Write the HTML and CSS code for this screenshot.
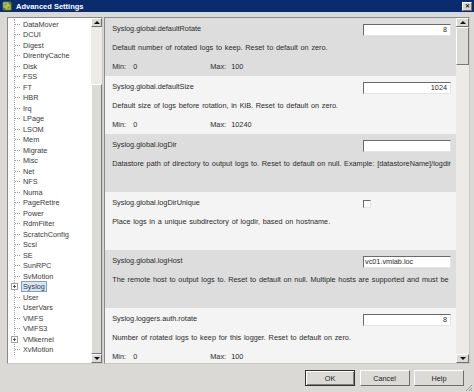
FILE: index.html
```html
<!DOCTYPE html>
<html>
<head>
  <meta charset="UTF-8">
  <title>Advanced Settings</title>
  <link rel="stylesheet" href="styles.css">
</head>
<body>

  <div class="titlebar">
    <svg class="app-icon" viewBox="0 0 10 10">
      <rect x="0.5" y="0.5" width="9" height="9" rx="1.5" fill="#5d7a26" />
      <rect x="2" y="2" width="4" height="4" fill="none" stroke="#e3dc6a" stroke-width="1" />
      <rect x="4" y="4" width="4" height="4" fill="none" stroke="#c8d85a" stroke-width="1" />
    </svg>
    <span class="title">Advanced Settings</span>
    <span class="close">&#x2715;</span>
  </div>

  <div class="content">
    <div class="tree-box">
      <div class="tree">
        <ul class="tree-list">
          <li>DataMover</li>
          <li>DCUI</li>
          <li>Digest</li>
          <li>DirentryCache</li>
          <li>Disk</li>
          <li>FSS</li>
          <li>FT</li>
          <li>HBR</li>
          <li>Irq</li>
          <li>LPage</li>
          <li>LSOM</li>
          <li>Mem</li>
          <li>Migrate</li>
          <li>Misc</li>
          <li>Net</li>
          <li>NFS</li>
          <li>Numa</li>
          <li>PageRetire</li>
          <li>Power</li>
          <li>RdmFilter</li>
          <li>ScratchConfig</li>
          <li>Scsi</li>
          <li>SE</li>
          <li>SunRPC</li>
          <li>SvMotion</li>
          <li class="expand"><span class="plus"></span><span class="sel">Syslog</span></li>
          <li>User</li>
          <li>UserVars</li>
          <li>VMFS</li>
          <li>VMFS3</li>
          <li class="expand"><span class="plus"></span>VMkernel</li>
          <li>XvMotion</li>
        </ul>
      </div>
      <div class="vscroll">
        <div class="arrow"><span class="tri-up"></span></div>
        <div class="track"><div class="thumb tree-thumb"></div></div>
        <div class="arrow"><span class="tri-down"></span></div>
      </div>
    </div>

    <div class="settings-box">
      <div class="settings">
        <div class="setting alt">
          <div class="setting-head">
            <span>Syslog.global.defaultRotate</span>
            <div class="control"><div class="field">8</div></div>
          </div>
          <div class="setting-desc">Default number of rotated logs to keep. Reset to default on zero.</div>
          <div class="range"><span class="lbl">Min:</span><span class="val">0</span><span class="lbl">Max:</span><span>100</span></div>
        </div>

        <div class="setting">
          <div class="setting-head">
            <span>Syslog.global.defaultSize</span>
            <div class="control"><div class="field">1024</div></div>
          </div>
          <div class="setting-desc">Default size of logs before rotation, in KiB. Reset to default on zero.</div>
          <div class="range"><span class="lbl">Min:</span><span class="val">0</span><span class="lbl">Max:</span><span>10240</span></div>
        </div>

        <div class="setting alt">
          <div class="setting-head">
            <span>Syslog.global.logDir</span>
            <div class="control"><div class="field"></div></div>
          </div>
          <div class="setting-desc">Datastore path of directory to output logs to. Reset to default on null. Example: [datastoreName]/logdir</div>
        </div>

        <div class="setting">
          <div class="setting-head">
            <span>Syslog.global.logDirUnique</span>
            <div class="control"><div class="check"></div></div>
          </div>
          <div class="setting-desc">Place logs in a unique subdirectory of logdir, based on hostname.</div>
        </div>

        <div class="setting alt">
          <div class="setting-head">
            <span>Syslog.global.logHost</span>
            <div class="control"><div class="field text">vc01.vmlab.loc</div></div>
          </div>
          <div class="setting-desc cut">The remote host to output logs to. Reset to default on null. Multiple hosts are supported and must be</div>
        </div>

        <div class="setting">
          <div class="setting-head">
            <span>Syslog.loggers.auth.rotate</span>
            <div class="control"><div class="field">8</div></div>
          </div>
          <div class="setting-desc">Number of rotated logs to keep for this logger. Reset to default on zero.</div>
          <div class="range"><span class="lbl">Min:</span><span class="val">0</span><span class="lbl">Max:</span><span>100</span></div>
        </div>
      </div>
      <div class="vscroll wide">
        <div class="arrow"><span class="tri-up"></span></div>
        <div class="track"><div class="thumb settings-thumb"></div></div>
        <div class="arrow"><span class="tri-down"></span></div>
      </div>
    </div>
  </div>

  <div class="footer">
    <button type="button" class="btn default">OK</button>
    <button type="button" class="btn">Cancel</button>
    <button type="button" class="btn">Help</button>
    <svg class="grip" viewBox="0 0 8 8">
      <path d="M7 1 L1 7 M7 4 L4 7 M7 6 L6 7" stroke="#9a9a9a" stroke-width="1" />
    </svg>
  </div>

</body>
</html>
```

FILE: styles.css
```css
body {
  margin: 0;
  width: 474px;
  height: 392px;
  overflow: hidden;
  background-color: #dbd9d5;
  font-family: "Liberation Sans", Arial, sans-serif;
  font-size: 7.3px;
  color: #2a2a2a;
}

.titlebar {
  height: 12px;
  background-color: #0b2c6c;
  display: flex;
  align-items: center;
  padding: 0 2px 0 2px;
  gap: 4px;
}

.app-icon {
  width: 10px;
  height: 10px;
}

.title {
  flex: 1;
  color: white;
  font-weight: bold;
  font-size: 7.5px;
}

.close {
  width: 10px;
  height: 9px;
  box-sizing: border-box;
  background-color: #d8d6d2;
  border: 1px solid;
  border-color: #fff #6e6e6e #6e6e6e #fff;
  font-size: 6px;
  line-height: 7px;
  text-align: center;
  font-weight: bold;
  color: #111;
}

.content {
  display: flex;
  height: 347px;
  padding: 5px 4px 0 7px;
}

/* left tree */

.tree-box {
  width: 99px;
  box-sizing: border-box;
  display: flex;
  background-color: white;
  border: 1px solid;
  border-color: #8a8a8a #c8c8c8 #c8c8c8 #8a8a8a;
}

.tree {
  flex: 1;
  overflow: hidden;
}

.tree-list {
  list-style: none;
  margin: 1px 0 0 6px;
  padding: 0;
  border-left: 1px dotted #a0a0a0;
  color: #3a3a3a;
}

.tree-list li {
  height: 10.5px;
  display: flex;
  align-items: center;
  white-space: nowrap;
}

.tree-list li::before {
  content: "";
  width: 5px;
  border-top: 1px dotted #a0a0a0;
  margin-right: 3px;
}

.tree-list li.expand::before {
  display: none;
}

.plus {
  width: 7px;
  height: 7px;
  box-sizing: border-box;
  margin-left: -4px;
  margin-right: 5px;
  border: 1px solid #a0a0a0;
  background: white linear-gradient(#555, #555) center / 3px 1px no-repeat;
  display: flex;
  justify-content: center;
  align-items: center;
}

.plus::after {
  content: "";
  width: 1px;
  height: 3px;
  background-color: #555;
}

.sel {
  margin-left: -2px;
  padding: 0 1px;
  line-height: 9px;
  border: 1px solid #7da2ce;
  background-color: #d6e5f7;
}

/* scrollbars */

.vscroll {
  width: 11px;
  display: flex;
  flex-direction: column;
  background-color: #ecebe8;
}

.vscroll.wide {
  width: 13px;
}

.arrow {
  height: 9px;
  box-sizing: border-box;
  background-color: #dcdad6;
  border: 1px solid;
  border-color: #fff #6e6e6e #6e6e6e #fff;
  display: flex;
  align-items: center;
  justify-content: center;
}

.tri-up {
  border-left: 3px solid transparent;
  border-right: 3px solid transparent;
  border-bottom: 3px solid #111;
}

.tri-down {
  border-left: 3px solid transparent;
  border-right: 3px solid transparent;
  border-top: 3px solid #111;
}

.track {
  flex: 1;
  display: flex;
  flex-direction: column;
}

.thumb {
  box-sizing: border-box;
  background-color: #dcdad6;
  border: 1px solid;
  border-color: #fff #7a7a7a #7a7a7a #fff;
}

.tree-thumb {
  margin-top: 57px;
  flex: 1;
}

.settings-thumb {
  height: 38px;
}

/* right settings list */

.settings-box {
  flex: 1;
  margin-left: 1px;
  display: flex;
  background-color: #f4f4f4;
  border: 1px solid;
  border-color: #8a8a8a #c8c8c8 #c8c8c8 #8a8a8a;
}

.settings {
  flex: 1;
  overflow: hidden;
}

.setting {
  height: 58px;
  box-sizing: border-box;
  padding: 1px 5px 0 7px;
  line-height: 19px;
}

.setting.alt {
  background-color: #dddddd;
}

.setting-head {
  height: 19px;
  display: flex;
  justify-content: space-between;
  align-items: center;
}

.setting-desc {
  white-space: nowrap;
  overflow: hidden;
  text-overflow: ellipsis;
  word-spacing: 0.7px;
}

.setting-desc.cut {
  text-overflow: clip;
}

.control {
  width: 88px;
  display: flex;
  padding-top: 2px;
}

.field {
  width: 88px;
  height: 12px;
  box-sizing: border-box;
  padding: 0 3px;
  background-color: white;
  border: 1px solid;
  border-color: #6a6a6a #e4e4e4 #e4e4e4 #6a6a6a;
  line-height: 10px;
  text-align: right;
}

.field.text {
  text-align: left;
  padding-left: 1px;
}

.check {
  width: 8px;
  height: 8px;
  box-sizing: border-box;
  background-color: white;
  border: 1px solid;
  border-color: #6a6a6a #e4e4e4 #e4e4e4 #6a6a6a;
}

.range .lbl {
  display: inline-block;
  width: 21px;
}

.range .val {
  display: inline-block;
  width: 77px;
}

/* bottom buttons */

.footer {
  height: 28px;
  display: flex;
  justify-content: flex-end;
  align-items: flex-start;
  gap: 4.5px;
  padding-right: 1px;
}

.btn {
  width: 50px;
  height: 16px;
  margin-top: 6px;
  padding: 0;
  font-family: "Liberation Sans", Arial, sans-serif;
  font-size: 7.3px;
  color: #222;
  background-color: #dcdad6;
  border: 1px solid;
  border-color: #fff #6e6e6e #6e6e6e #fff;
}

.btn.default {
  border-color: #333;
  box-shadow: inset 1px 1px #fff, inset -1px -1px #808080;
}

.grip {
  width: 8px;
  height: 8px;
  align-self: flex-end;
  margin-left: -3.5px;
}
```
